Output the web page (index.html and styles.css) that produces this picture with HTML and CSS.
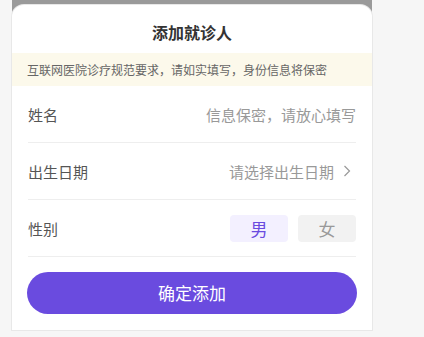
FILE: index.html
```html
<!DOCTYPE html>
<html lang="zh-CN">
<head>
<meta charset="utf-8">
<link rel="stylesheet" href="styles.css">
</head>
<body>
<div class="stage">
  <div class="mask">
    <div class="card">
      <div class="title">添加就诊人</div>
      <div class="notice">互联网医院诊疗规范要求，请如实填写，身份信息将保密</div>
      <div class="row">
        <span class="label">姓名</span>
        <span class="placeholder">信息保密，请放心填写</span>
      </div>
      <div class="row">
        <span class="label">出生日期</span>
        <span class="placeholder picker">请选择出生日期
          <svg class="chev" width="8" height="12" viewBox="0 0 8 12"><polyline points="1.5,1 6.5,6 1.5,11" fill="none" stroke="#999" stroke-width="1.2"/></svg>
        </span>
      </div>
      <div class="row">
        <span class="label">性别</span>
        <div class="genders">
          <span class="gender active">男</span>
          <span class="gender">女</span>
        </div>
      </div>
      <div class="btn">确定添加</div>
    </div>
  </div>
</div>
</body>
</html>
```
FILE: styles.css
```css
html, body {
  margin: 0;
  padding: 0;
}
body {
  background: #f6f6f6;
  font-family: "Noto Sans CJK SC", "Noto Sans", sans-serif;
  width: 424px;
  height: 337px;
  overflow: hidden;
}
.stage {
  display: flex;
  padding-left: 12px;
}
.mask {
  width: 360px;
  background: #9a9a9a;
  padding-top: 5px;
}
.card {
  background: #fff;
  border-radius: 12px 12px 0 0;
  box-shadow: 0 0 0 1px #e8e8e8;
  padding-bottom: 16px;
}
.title {
  text-align: center;
  font-size: 16px;
  font-weight: bold;
  color: #333;
  line-height: 24px;
  padding: 15px 0 9px;
}
.notice {
  background: #fcf9eb;
  color: #666;
  font-size: 12px;
  height: 33px;
  line-height: 33px;
  padding-left: 15px;
}
.row {
  margin: 0 16px;
  height: 56px;
  border-bottom: 1px solid #eeeeee;
  display: flex;
  align-items: center;
  justify-content: space-between;
}
.label {
  font-size: 15px;
  color: #555;
}
.placeholder {
  font-size: 15px;
  color: #999;
}
.picker {
  display: flex;
  align-items: center;
}
.chev {
  margin-left: 9px;
  margin-right: 5px;
}
.genders {
  display: flex;
  gap: 10px;
}
.gender {
  width: 58px;
  height: 27px;
  line-height: 27px;
  text-align: center;
  border-radius: 4px;
  background: #f2f2f2;
  color: #999;
  font-size: 17px;
}
.gender.active {
  background: #f3f0ff;
  color: #6a4bdf;
}
.btn {
  margin: 15px 15px 0;
  height: 42px;
  line-height: 42px;
  border-radius: 21px;
  background: #6a4bdf;
  color: #fff;
  text-align: center;
  font-size: 17px;
}
```
